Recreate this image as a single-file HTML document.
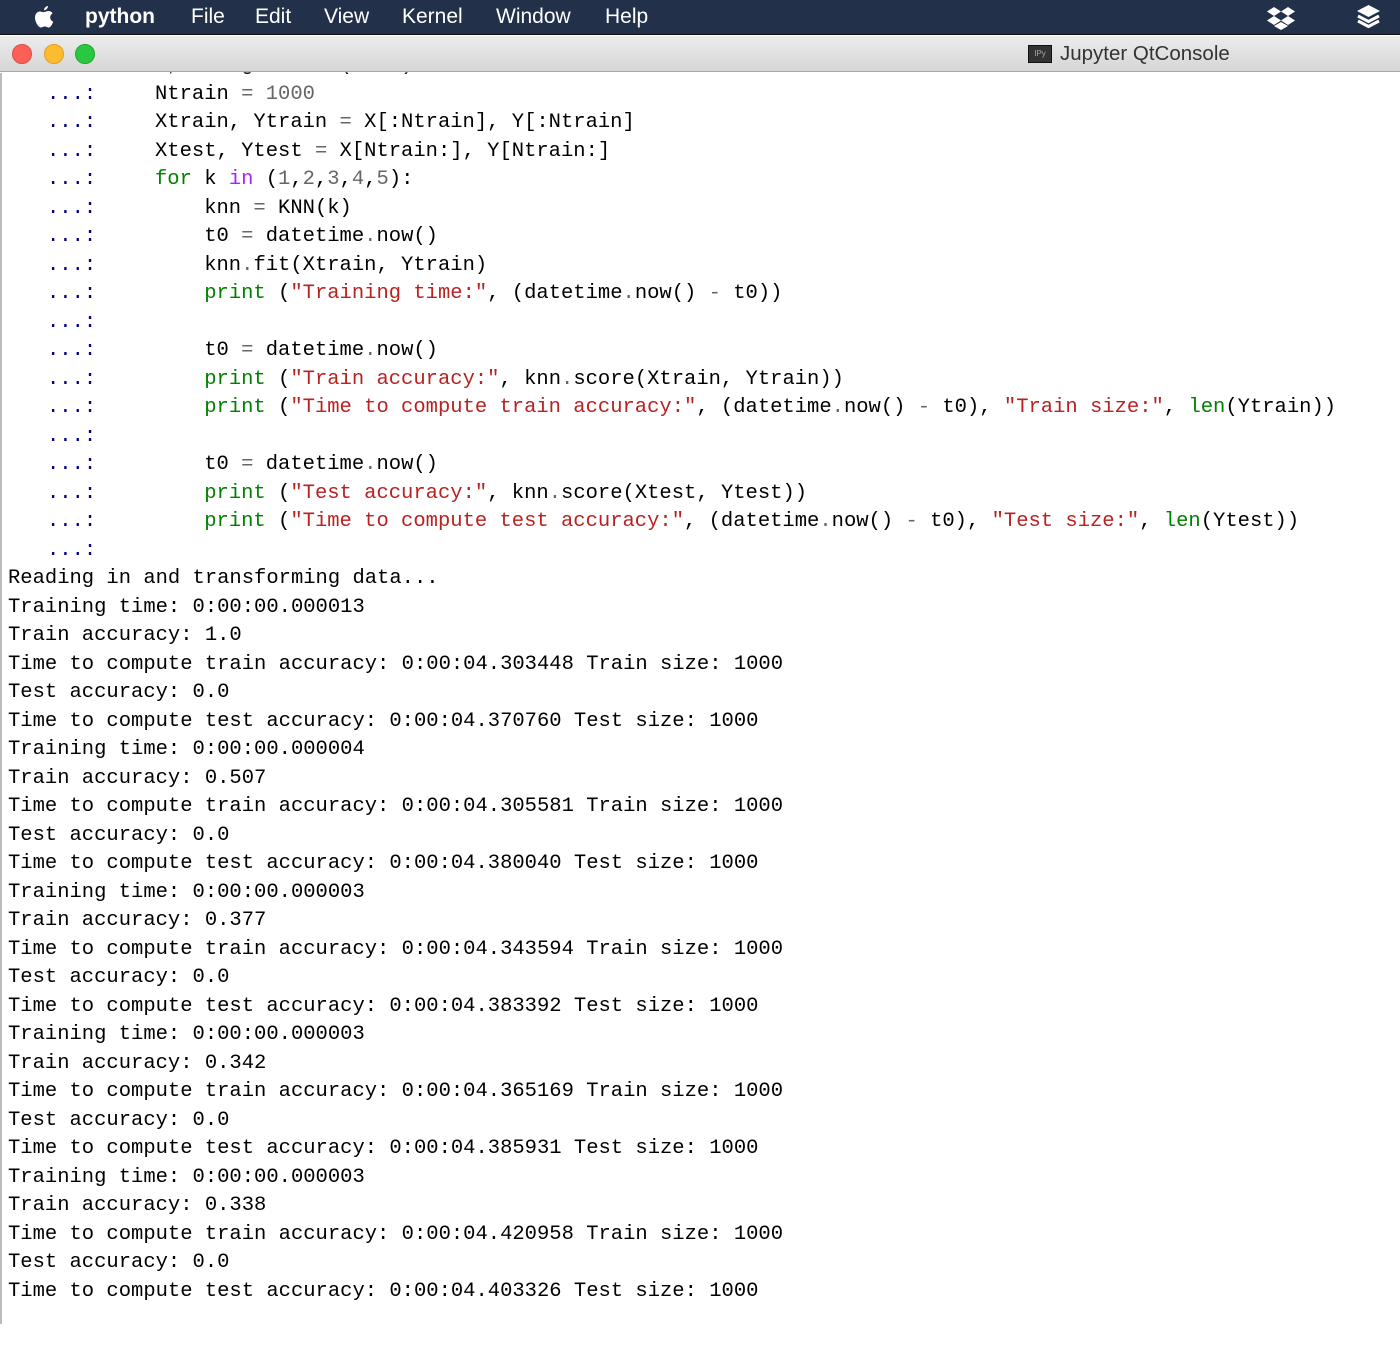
<!DOCTYPE html>
<html><head><meta charset="utf-8"><style>
*{margin:0;padding:0;box-sizing:border-box}
body{width:1400px;height:1324px;background:#fff;position:relative;overflow:hidden;font-family:"Liberation Mono",monospace}
#menu{position:absolute;left:0;top:0;width:1400px;height:35px;background:#22304a;border-bottom:1px solid #111;color:#fff;font-family:"Liberation Sans",sans-serif;font-size:21px}
#menu span{position:absolute;top:5px}
#title{position:absolute;left:0;top:36px;width:1400px;height:36px;background:linear-gradient(#ececec,#d6d6d6);border-bottom:1px solid #a8a8a8}
.dot{position:absolute;top:44px;width:20px;height:20px;border-radius:50%}
#tt{position:absolute;left:1060px;top:42px;font-family:"Liberation Sans",sans-serif;font-size:20.5px;color:#333}
.l{position:absolute;height:28.5px;line-height:28.5px;font-size:20.5px;white-space:pre;color:#000;font-family:"Liberation Mono",monospace}
.p{color:#000080}
.k{color:#008000}.i{color:#aa22ff}.s{color:#ba2121}.n{color:#666}.o{color:#666}
</style></head><body>
<div id="menu">
<svg style="position:absolute;left:33px;top:5px" width="22" height="25" viewBox="0 0 22 25"><path d="M15 1c0 2-1.5 4-4 4.3C11 3 13 1.2 15 1zM11 7c1.5 0 3-1 4.3-1 2 0 3.5 1 4.3 2.4-3.6 2-3 7 .6 8.3-.8 2.4-2.6 5.8-4.6 5.8-1.5 0-2-1-3.8-1s-2.5 1-4 1C5.5 22.5 2 17 2 12.5 2 8.6 4.6 6.5 7 6.5c1.5 0 2.8 1 4 .5z" fill="#fff"/></svg>
<span style="left:85px;font-weight:bold">python</span>
<span style="left:191px">File</span><span style="left:255px">Edit</span><span style="left:324px">View</span><span style="left:402px">Kernel</span><span style="left:496px">Window</span><span style="left:605px">Help</span>
<svg style="position:absolute;left:1267px;top:5px" width="28" height="25" viewBox="0 0 28 25"><path d="M7 2l7 4.5-7 4.5-7-4.5zM21 2l7 4.5-7 4.5-7-4.5zM7 11l7 4.5-7 4.5-7-4.5zM21 11l7 4.5-7 4.5-7-4.5zM14 17l7 4-7 4-7-4z" fill="#fff"/></svg>
<svg style="position:absolute;left:1356px;top:4px" width="25" height="26" viewBox="0 0 25 26"><path d="M12.5 1L24 7l-11.5 6L1 7z" fill="#fff"/><path d="M2 12l10.5 5.5L23 12M2 17l10.5 5.5L23 17" stroke="#fff" stroke-width="3" fill="none"/></svg>
</div>
<div id="title"></div>
<div class="dot" style="left:12px;background:#fc5f57;border:1px solid #de4a42"></div>
<div class="dot" style="left:44px;background:#fdbc2e;border:1px solid #dfa023"></div>
<div class="dot" style="left:75px;background:#29c840;border:1px solid #1aab29"></div>
<div style="position:absolute;left:1028px;top:45px;width:24px;height:18px;background:#333;border:1px solid #111;color:#aaa;font-size:8px;line-height:16px;text-align:center;font-family:'Liberation Sans',sans-serif">IPy</div>
<div id="tt">Jupyter QtConsole</div>
<div style="position:absolute;left:0;top:73px;width:2px;height:1251px;background:#bbb"></div>
<div style="position:absolute;left:0;top:52.25px;width:1400px;height:1300px;clip-path:inset(20px 0 0 0)">
<div class="l" style="top:0;left:47px"><span class="p">...:</span></div><div class="l" style="top:0;left:155px">X, Y <span class="o">=</span> get_data(<span class="n">2000</span>)</div>
<div class="l" style="top:28.5px;left:47px"><span class="p">...:</span></div><div class="l" style="top:28.5px;left:155px">Ntrain <span class="o">=</span> <span class="n">1000</span></div>
<div class="l" style="top:57px;left:47px"><span class="p">...:</span></div><div class="l" style="top:57px;left:155px">Xtrain, Ytrain <span class="o">=</span> X[:Ntrain], Y[:Ntrain]</div>
<div class="l" style="top:85.5px;left:47px"><span class="p">...:</span></div><div class="l" style="top:85.5px;left:155px">Xtest, Ytest <span class="o">=</span> X[Ntrain:], Y[Ntrain:]</div>
<div class="l" style="top:114px;left:47px"><span class="p">...:</span></div><div class="l" style="top:114px;left:155px"><span class="k">for</span> k <span class="i">in</span> (<span class="n">1</span>,<span class="n">2</span>,<span class="n">3</span>,<span class="n">4</span>,<span class="n">5</span>):</div>
<div class="l" style="top:142.5px;left:47px"><span class="p">...:</span></div><div class="l" style="top:142.5px;left:155px">    knn <span class="o">=</span> KNN(k)</div>
<div class="l" style="top:171px;left:47px"><span class="p">...:</span></div><div class="l" style="top:171px;left:155px">    t0 <span class="o">=</span> datetime<span class="o">.</span>now()</div>
<div class="l" style="top:199.5px;left:47px"><span class="p">...:</span></div><div class="l" style="top:199.5px;left:155px">    knn<span class="o">.</span>fit(Xtrain, Ytrain)</div>
<div class="l" style="top:228px;left:47px"><span class="p">...:</span></div><div class="l" style="top:228px;left:155px">    <span class="k">print</span> (<span class="s">"Training time:"</span>, (datetime<span class="o">.</span>now() <span class="o">-</span> t0))</div>
<div class="l" style="top:256.5px;left:47px"><span class="p">...:</span></div>
<div class="l" style="top:285px;left:47px"><span class="p">...:</span></div><div class="l" style="top:285px;left:155px">    t0 <span class="o">=</span> datetime<span class="o">.</span>now()</div>
<div class="l" style="top:313.5px;left:47px"><span class="p">...:</span></div><div class="l" style="top:313.5px;left:155px">    <span class="k">print</span> (<span class="s">"Train accuracy:"</span>, knn<span class="o">.</span>score(Xtrain, Ytrain))</div>
<div class="l" style="top:342px;left:47px"><span class="p">...:</span></div><div class="l" style="top:342px;left:155px">    <span class="k">print</span> (<span class="s">"Time to compute train accuracy:"</span>, (datetime<span class="o">.</span>now() <span class="o">-</span> t0), <span class="s">"Train size:"</span>, <span class="k">len</span>(Ytrain))</div>
<div class="l" style="top:370.5px;left:47px"><span class="p">...:</span></div>
<div class="l" style="top:399px;left:47px"><span class="p">...:</span></div><div class="l" style="top:399px;left:155px">    t0 <span class="o">=</span> datetime<span class="o">.</span>now()</div>
<div class="l" style="top:427.5px;left:47px"><span class="p">...:</span></div><div class="l" style="top:427.5px;left:155px">    <span class="k">print</span> (<span class="s">"Test accuracy:"</span>, knn<span class="o">.</span>score(Xtest, Ytest))</div>
<div class="l" style="top:456px;left:47px"><span class="p">...:</span></div><div class="l" style="top:456px;left:155px">    <span class="k">print</span> (<span class="s">"Time to compute test accuracy:"</span>, (datetime<span class="o">.</span>now() <span class="o">-</span> t0), <span class="s">"Test size:"</span>, <span class="k">len</span>(Ytest))</div>
<div class="l" style="top:484.5px;left:47px"><span class="p">...:</span></div>
<pre class="l" style="top:513px;left:8px;height:auto">Reading in and transforming data...
Training time: 0:00:00.000013
Train accuracy: 1.0
Time to compute train accuracy: 0:00:04.303448 Train size: 1000
Test accuracy: 0.0
Time to compute test accuracy: 0:00:04.370760 Test size: 1000
Training time: 0:00:00.000004
Train accuracy: 0.507
Time to compute train accuracy: 0:00:04.305581 Train size: 1000
Test accuracy: 0.0
Time to compute test accuracy: 0:00:04.380040 Test size: 1000
Training time: 0:00:00.000003
Train accuracy: 0.377
Time to compute train accuracy: 0:00:04.343594 Train size: 1000
Test accuracy: 0.0
Time to compute test accuracy: 0:00:04.383392 Test size: 1000
Training time: 0:00:00.000003
Train accuracy: 0.342
Time to compute train accuracy: 0:00:04.365169 Train size: 1000
Test accuracy: 0.0
Time to compute test accuracy: 0:00:04.385931 Test size: 1000
Training time: 0:00:00.000003
Train accuracy: 0.338
Time to compute train accuracy: 0:00:04.420958 Train size: 1000
Test accuracy: 0.0
Time to compute test accuracy: 0:00:04.403326 Test size: 1000</pre>
</div>
</body></html>
